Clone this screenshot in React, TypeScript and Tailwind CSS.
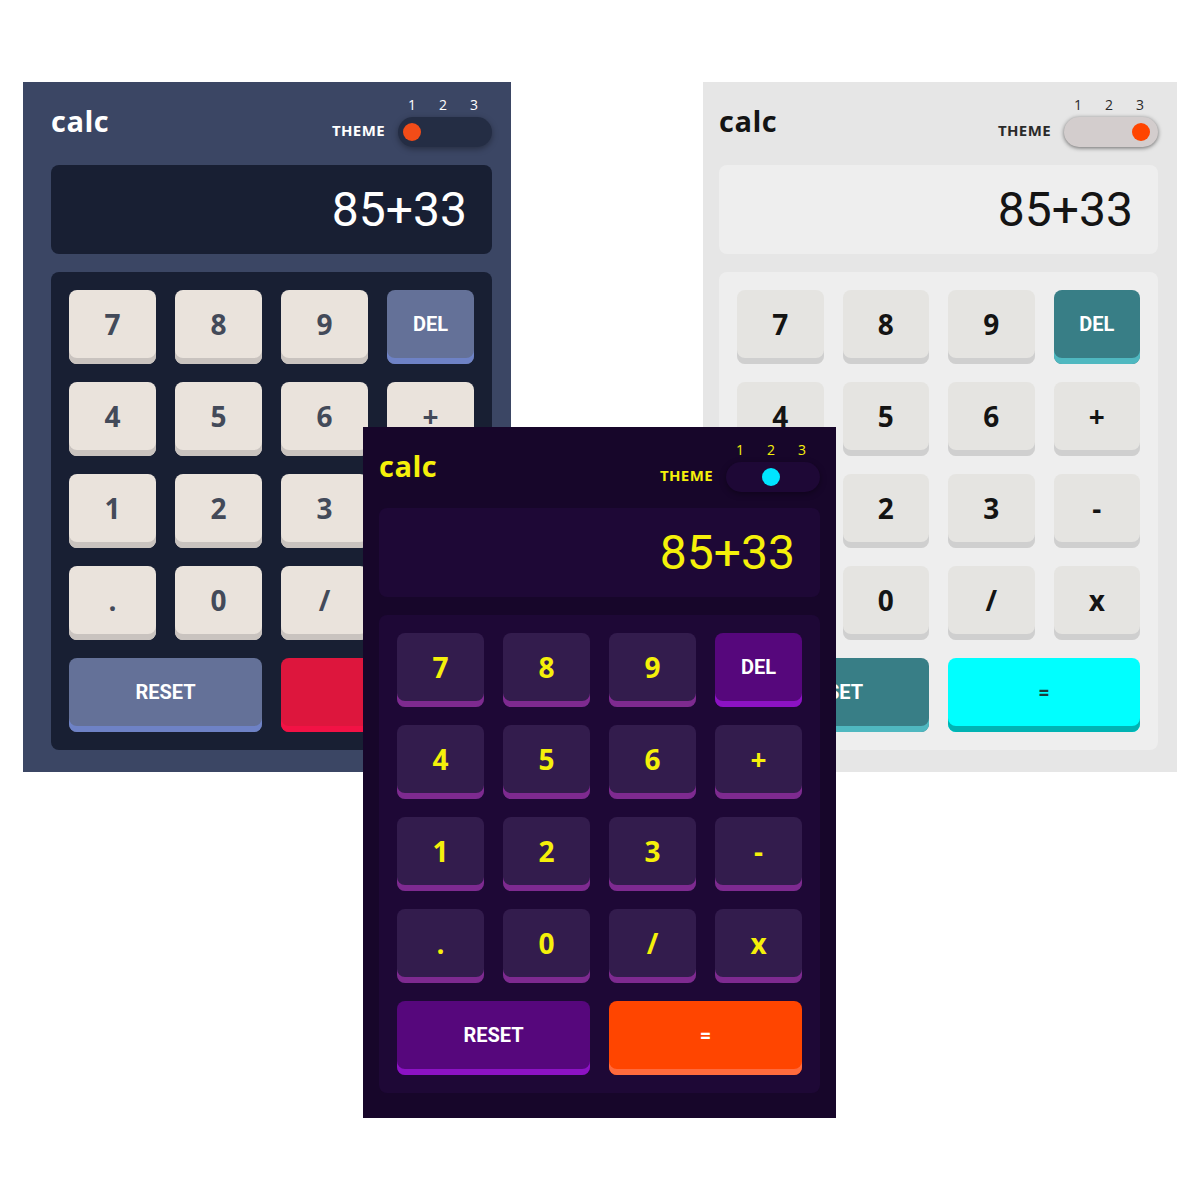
import React from "react";

type Theme = {
  id: number;
  frame: string;
  header: string;
  title: string;
  label: string;
  pill: string;
  knob: string;
  knobPos: string;
  screen: string;
  pad: string;
  key: string;
  accent: string;
  equals: string;
};

const THEMES: Theme[] = [
  {
    id: 1,
    frame: "left-[23px] top-[82px] w-[488px] h-[690px] pl-[28px] pr-[19px] bg-[#3b4664]",
    header: "h-[83px]",
    title: "text-white",
    label: "text-white",
    pill: "bg-[#242d44] shadow-[0_2px_6px_rgba(0,0,0,0.35)]",
    knob: "bg-[#f24c18]",
    knobPos: "ml-[5px]",
    screen: "bg-[#181f33] text-white",
    pad: "bg-[#181f33]",
    key: "bg-[#eae3dc] text-[#434a59] shadow-[inset_0_-6px_0_#c9c3bf]",
    accent: "bg-[#647198] text-white shadow-[inset_0_-6px_0_#6e82c6]",
    equals: "bg-[#dd163d] text-white shadow-[inset_0_-6px_0_#f21245]",
  },
  {
    id: 2,
    frame: "left-[703px] top-[82px] w-[474px] h-[690px] pl-[16px] pr-[19px] bg-[#e6e6e6]",
    header: "h-[83px]",
    title: "text-[#141414]",
    label: "text-[#2a2a2a]",
    pill: "bg-[#d3cdcd] shadow-[0_1px_4px_rgba(0,0,0,0.55)]",
    knob: "bg-[#ff4500]",
    knobPos: "ml-[68px]",
    screen: "bg-[#eeeeee] text-[#141414]",
    pad: "bg-[#eeeeee]",
    key: "bg-[#e5e4e1] text-[#141414] shadow-[inset_0_-6px_0_#cfcfcf]",
    accent: "bg-[#387e86] text-white shadow-[inset_0_-6px_0_#4fb8c0]",
    equals: "bg-[#00ffff] text-[#1c3c3c] shadow-[inset_0_-6px_0_#00b3b3]",
  },
  {
    id: 3,
    frame: "left-[363px] top-[427px] w-[473px] h-[691px] pl-[16px] pr-[16px] bg-[#17062a] z-10",
    header: "h-[81px]",
    title: "text-[#f5f00a]",
    label: "text-[#f5f00a]",
    pill: "bg-[#1e0836] shadow-[0_2px_6px_rgba(0,0,0,0.35)]",
    knob: "bg-[#00e5ff]",
    knobPos: "ml-[36px]",
    screen: "bg-[#1e0836] text-[#f5f00a]",
    pad: "bg-[#1e0836]",
    key: "bg-[#331c4d] text-[#f5f00a] shadow-[inset_0_-6px_0_#7e2a90]",
    accent: "bg-[#56077c] text-white shadow-[inset_0_-6px_0_#8c12c4]",
    equals: "bg-[#ff4500] text-white shadow-[inset_0_-6px_0_#ff6a3d]",
  },
];

const KEYS = ["7", "8", "9", "DEL", "4", "5", "6", "+", "1", "2", "3", "-", ".", "0", "/", "x"];

function Key({ label, t }: { label: string; t: Theme }) {
  const isDel = label === "DEL";
  return (
    <button
      className={
        "flex h-[74px] items-center justify-center rounded-lg pb-[6px] " +
        (isDel
          ? t.accent + " font-['Roboto',sans-serif] text-[20px] font-bold"
          : t.key + " font-['Open_Sans',sans-serif] text-[28px] font-bold")
      }
    >
      {label}
    </button>
  );
}

function Calculator({ t }: { t: Theme }) {
  return (
    <div className={"absolute flex flex-col " + t.frame}>
      {/* title + theme switch */}
      <div className={"flex items-start justify-between " + t.header}>
        <h1
          className={
            "pt-[24px] font-['Open_Sans',sans-serif] text-[29px] font-bold leading-none tracking-[0.5px] " +
            t.title
          }
        >
          calc
        </h1>
        <div className="flex items-end gap-[13px] pt-[15px]">
          <span
            className={
              "mb-[6px] font-['Open_Sans',sans-serif] text-[15px] font-bold tracking-[0.4px] " + t.label
            }
          >
            THEME
          </span>
          <div className="flex flex-col">
            <div
              className={
                "flex h-[16px] items-center gap-[13px] pl-[5px] font-['Open_Sans',sans-serif] text-[14px] " +
                t.label
              }
            >
              {[1, 2, 3].map((n) => (
                <span key={n} className="w-[18px] text-center leading-none">
                  {n}
                </span>
              ))}
            </div>
            <div className={"mt-[4px] flex h-[30px] w-[94px] items-center rounded-full " + t.pill}>
              <div className={"h-[18px] w-[18px] rounded-full " + t.knob + " " + t.knobPos} />
            </div>
          </div>
        </div>
      </div>

      {/* display */}
      <div
        className={
          "flex h-[89px] items-center justify-end rounded-lg pr-[25px] font-['Roboto',sans-serif] text-[48px] leading-none " +
          t.screen
        }
      >
        85+33
      </div>

      {/* keypad */}
      <div className={"mt-[18px] grid grid-cols-4 gap-x-[19px] gap-y-[18px] rounded-lg p-[18px] " + t.pad}>
        {KEYS.map((k) => (
          <Key key={k} label={k} t={t} />
        ))}
        <button
          className={
            "col-span-2 flex h-[74px] items-center justify-center rounded-lg pb-[6px] font-['Roboto',sans-serif] text-[20px] font-bold " +
            t.accent
          }
        >
          RESET
        </button>
        <button
          className={
            "col-span-2 flex h-[74px] items-center justify-center rounded-lg pb-[6px] font-['Roboto',sans-serif] text-[20px] font-bold " +
            t.equals
          }
        >
          =
        </button>
      </div>
    </div>
  );
}

export default function App() {
  return (
    <div className="relative h-[1200px] w-[1200px] overflow-hidden bg-white">
      {THEMES.map((t) => (
        <Calculator key={t.id} t={t} />
      ))}
    </div>
  );
}
